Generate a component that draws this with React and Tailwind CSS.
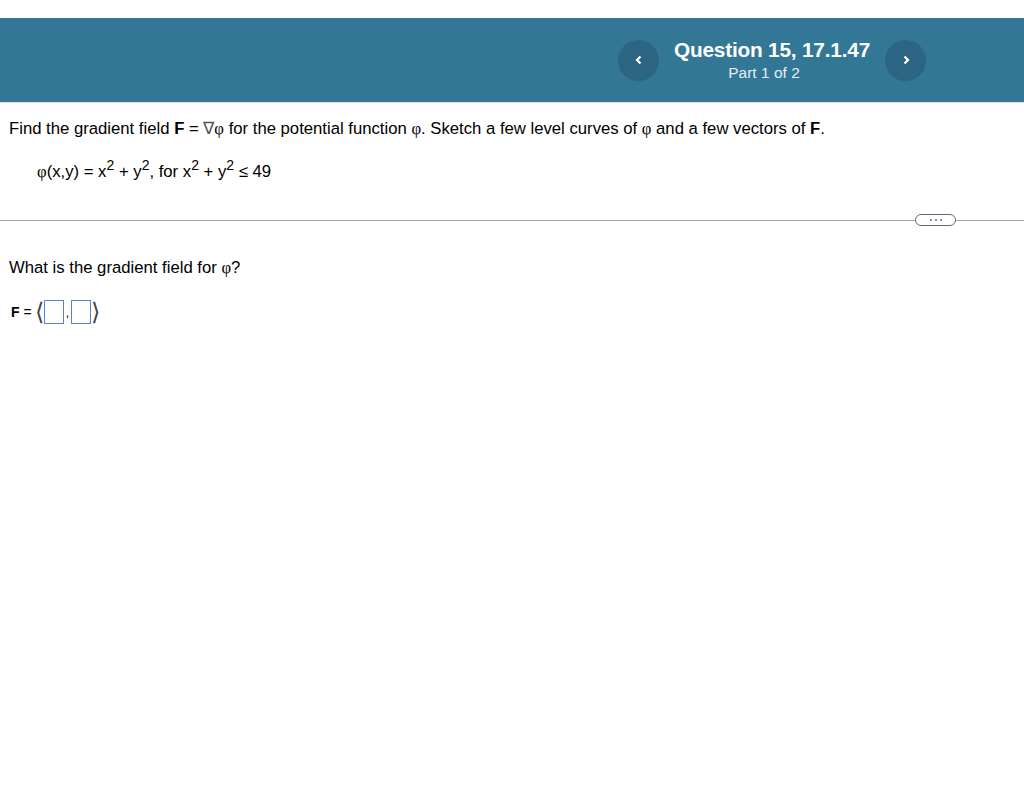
import React from "react";

const Phi = () => <span style={{ fontFamily: "'Liberation Serif', serif" }}>φ</span>;

// base letter with a raised "2"
const Sq = ({ children }) => (
  <span>
    {children}
    <span className="inline-block text-[14px] leading-none -translate-y-[7px]">2</span>
  </span>
);

const NavButton = ({ dir }) => (
  <button className="w-[41px] h-[41px] rounded-full bg-[#2c6483] flex items-center justify-center">
    <svg width="10" height="12" viewBox="0 0 10 12">
      {dir === "left" ? (
        <path d="M6.5 2.5 L3 6 L6.5 9.5" stroke="white" strokeWidth="2.2" fill="none" />
      ) : (
        <path d="M3.5 2.5 L7 6 L3.5 9.5" stroke="white" strokeWidth="2.2" fill="none" />
      )}
    </svg>
  </button>
);

export default function App() {
  return (
    <div className="min-h-[789px] bg-white text-black" style={{ fontFamily: "'Liberation Sans', Arial, sans-serif" }}>
      <div className="h-[18px]" />

      {/* Header */}
      <div className="h-[85px] bg-[#337796] border-b border-[#dfe3e8] flex items-center justify-end pr-[98px]">
        <div className="flex items-center gap-[15px]">
          <NavButton dir="left" />
          <div className="flex flex-col items-center text-white">
            <div className="text-[20.8px] font-bold leading-[24px] tracking-[-0.2px]">Question 15, 17.1.47</div>
            <div className="text-[15.5px] leading-[18px] text-[#e4eef3] mt-[2px] mr-[16px]">Part 1 of 2</div>
          </div>
          <NavButton dir="right" />
        </div>
      </div>

      {/* Question */}
      <div className="px-[9px] pt-[16px] text-[16.7px]">
        <p className="leading-[20px]">
          Find the gradient field <b>F</b> = <span className="text-[#555]" style={{ fontFamily: "'Liberation Serif', serif" }}>∇</span>
          <Phi /> for the potential function <Phi />. Sketch a few level curves of <Phi /> and a few vectors of <b>F</b>.
        </p>
        <p className="pl-[28px] mt-[23px] leading-[20px]">
          <Phi />(x,y) = <Sq>x</Sq> + <Sq>y</Sq>, for <Sq>x</Sq> + <Sq>y</Sq> ≤ 49
        </p>
      </div>

      {/* Divider */}
      <div className="relative mt-[32px] h-[12px] flex items-center">
        <div className="w-full h-px bg-[#a3a8ad]" />
        <div className="absolute left-[915px] top-0 w-[41px] h-[12px] rounded-full border border-[#5f6b7a] bg-white flex items-center justify-center gap-[3px]">
          <span className="w-[2px] h-[2px] rounded-full bg-[#5f6b7a]" />
          <span className="w-[2px] h-[2px] rounded-full bg-[#5f6b7a]" />
          <span className="w-[2px] h-[2px] rounded-full bg-[#5f6b7a]" />
        </div>
      </div>

      {/* Answer */}
      <div className="px-[9px] pt-[32px] text-[16.7px]">
        <p className="leading-[20px]">
          What is the gradient field for <Phi />?
        </p>
        <div className="mt-[22px] flex items-center pl-[2px]">
          <b className="text-[14px]">F</b>
          <span className="ml-[4px] text-[14px]">=</span>
          <span className="ml-[3px] text-[#444] text-[24px] leading-[24px] font-light" style={{ fontFamily: "'DejaVu Sans', sans-serif" }}>⟨</span>
          <span className="w-[20px] h-[24px] border border-[#5b7fd0]" />
          <span className="text-[12px] self-end mb-[2px] mx-[2px]">,</span>
          <span className="w-[20px] h-[24px] border border-[#5b7fd0]" />
          <span className="text-[#444] text-[24px] leading-[24px] font-light" style={{ fontFamily: "'DejaVu Sans', sans-serif" }}>⟩</span>
        </div>
      </div>
    </div>
  );
}
